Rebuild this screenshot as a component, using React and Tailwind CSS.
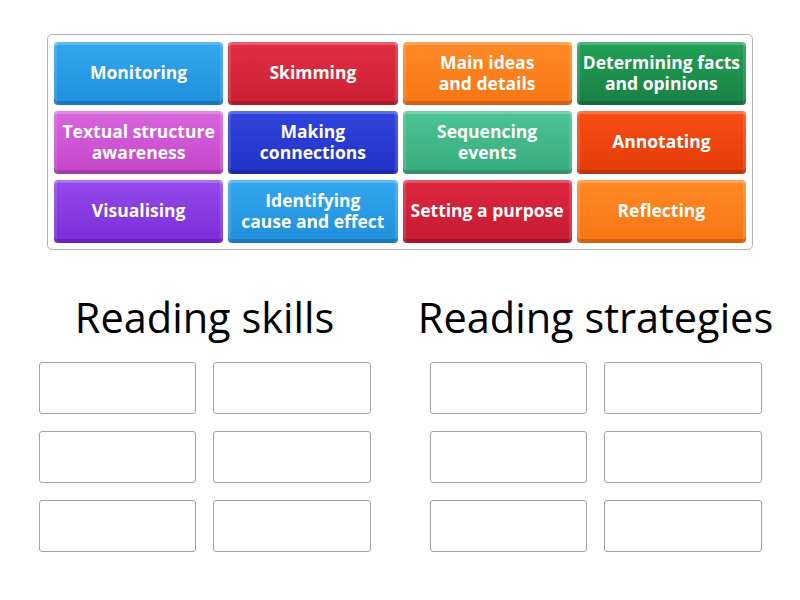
const tiles = [
  { lines: ["Monitoring"], cls: "bg-gradient-to-b from-[#34a6ee] to-[#1f8fdc]" },
  { lines: ["Skimming"], cls: "bg-gradient-to-b from-[#e02d42] to-[#cc1f33]" },
  { lines: ["Main ideas", "and details"], cls: "bg-gradient-to-b from-[#ff8a26] to-[#f77512]" },
  { lines: ["Determining facts", "and opinions"], cls: "bg-gradient-to-b from-[#21a156] to-[#1a7f45]" },
  { lines: ["Textual structure", "awareness"], cls: "bg-gradient-to-b from-[#d866dc] to-[#c444cb]" },
  { lines: ["Making", "connections"], cls: "bg-gradient-to-b from-[#2f43dc] to-[#2232c6]" },
  { lines: ["Sequencing", "events"], cls: "bg-gradient-to-b from-[#4cc493] to-[#37ab7b]" },
  { lines: ["Annotating"], cls: "bg-gradient-to-b from-[#f84d14] to-[#e33c08]" },
  { lines: ["Visualising"], cls: "bg-gradient-to-b from-[#944aea] to-[#7b2bd9]" },
  { lines: ["Identifying", "cause and effect"], cls: "bg-gradient-to-b from-[#34a6ee] to-[#1f8fdc]" },
  { lines: ["Setting a purpose"], cls: "bg-gradient-to-b from-[#de2740] to-[#c41a31]" },
  { lines: ["Reflecting"], cls: "bg-gradient-to-b from-[#ff8a26] to-[#f77512]" },
];

function Tile({ lines, cls }) {
  return (
    <div
      className={`${cls} h-[63px] rounded-[4px] flex items-center justify-center text-center text-white font-bold text-[17.5px] leading-[21px] whitespace-nowrap shadow-[inset_0_-4px_0_rgba(0,0,0,0.16),inset_0_3px_0_rgba(255,255,255,0.22),inset_3px_0_0_rgba(255,255,255,0.12),inset_-3px_0_0_rgba(255,255,255,0.12)]`}
    >
      <p className="pb-[2px]">
        {lines[0]}
        {lines[1] && <br />}
        {lines[1]}
      </p>
    </div>
  );
}

function Group({ title }) {
  return (
    <div className="w-[332px] flex flex-col items-center">
      <h2 className="text-[41.5px] leading-[48px] font-normal text-black whitespace-nowrap">
        {title}
      </h2>
      <div className="mt-[21px] grid grid-cols-2 gap-x-[17px] gap-y-[17px] w-full">
        {[0, 1, 2, 3, 4, 5].map((i) => (
          <div
            key={i}
            className="h-[52px] border border-[#a3a3a3] rounded-[3px] bg-white"
          />
        ))}
      </div>
    </div>
  );
}

export default function App() {
  return (
    <div
      className="w-[800px] h-[600px] bg-white overflow-hidden"
      style={{ fontFamily: '"Open Sans", "Noto Sans", sans-serif' }}
    >
      <div className="pt-[34px] flex justify-center">
        <div className="w-[706px] border border-[#b5b5b5] rounded-[5px] pt-[7px] pb-[6px] px-[6px]">
          <div className="grid grid-cols-4 gap-x-[5px] gap-y-[6px]">
            {tiles.map((t) => (
              <Tile key={t.lines.join(" ")} {...t} />
            ))}
          </div>
        </div>
      </div>
      <div className="mt-[43px] flex justify-center gap-[59px]">
        <Group title="Reading skills" />
        <Group title="Reading strategies" />
      </div>
    </div>
  );
}
